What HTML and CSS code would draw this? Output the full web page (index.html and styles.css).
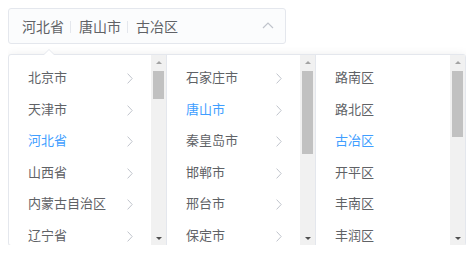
FILE: index.html
```html
<!DOCTYPE html>
<html lang="zh-CN">
<head>
  <meta charset="UTF-8"/>
  <title>级联选择器</title>
  <link rel="stylesheet" href="styles.css">
</head>
<body>
  <div class="cascader">
    <!-- 输入框 -->
    <div class="cascader-input">
      <span class="label">
        <span>河北省</span><i class="sep"></i><span>唐山市</span><i class="sep"></i><span>古冶区</span>
      </span>
      <svg class="caret" width="12" height="7" viewBox="0 0 12 7">
        <path d="M1 6 L6 1 L11 6" fill="none" stroke="#c0c4cc" stroke-width="1.2"/>
      </svg>
    </div>

    <!-- 下拉面板 -->
    <div class="cascader-panel">
      <div class="menu menu-1">
        <ul id="list-1" class="list"></ul>
        <div class="scrollbar"><b class="btn up"></b><div class="track"><i class="thumb" style="height: 28px"></i></div><b class="btn down"></b></div>
      </div>
      <div class="menu menu-2">
        <ul id="list-2" class="list"></ul>
        <div class="scrollbar"><b class="btn up"></b><div class="track"><i class="thumb" style="height: 83px"></i></div><b class="btn down"></b></div>
      </div>
      <div class="menu menu-3">
        <ul id="list-3" class="list"></ul>
        <div class="scrollbar"><b class="btn up"></b><div class="track"><i class="thumb" style="height: 66px"></i></div><b class="btn down"></b></div>
      </div>
    </div>
  </div>

  <div class="page-line"></div>

  <script>
    const provinces = ["北京市", "天津市", "河北省", "山西省", "内蒙古自治区", "辽宁省", "吉林省", "黑龙江省",
      "上海市", "江苏省", "浙江省", "安徽省", "福建省", "江西省", "山东省", "河南省", "湖北省", "湖南省",
      "广东省", "广西壮族自治区", "海南省", "重庆市", "四川省", "贵州省", "云南省", "西藏自治区", "陕西省",
      "甘肃省", "青海省", "宁夏回族自治区", "新疆维吾尔自治区", "台湾省", "香港特别行政区", "澳门特别行政区"];
    const cities = ["石家庄市", "唐山市", "秦皇岛市", "邯郸市", "邢台市", "保定市", "张家口市", "承德市",
      "沧州市", "廊坊市", "衡水市"];
    const districts = ["路南区", "路北区", "古冶区", "开平区", "丰南区", "丰润区", "曹妃甸区", "滦县",
      "滦南县", "乐亭县", "迁西县", "玉田县", "遵化市", "迁安市"];

    const arrow = '<svg class="arrow" width="6" height="11" viewBox="0 0 6 11">' +
      '<path d="M0.6 0.6 L5.2 5.5 L0.6 10.4" fill="none" stroke="#c0c4cc" stroke-width="1"/></svg>';

    function fill(id, items, active, hasChild) {
      document.getElementById(id).innerHTML = items.map(name =>
        '<li class="item' + (name === active ? ' active' : '') + '"><span class="name">' + name + '</span>' +
        (hasChild ? arrow : '') + '</li>'
      ).join("");
    }
    fill("list-1", provinces, "河北省", true);
    fill("list-2", cities, "唐山市", true);
    fill("list-3", districts, "古冶区", false);
  </script>
</body>
</html>
```

FILE: styles.css
```css
html {
  height: 100%;
}
body {
  margin: 8px;
  min-height: 237px;
  font-family: "Liberation Sans", "Noto Sans CJK SC", sans-serif;
  font-size: 13px;
  color: #606266;
  background: #fff;
}
.cascader {
  position: relative;
  width: 278px;
  z-index: 2;
}
/* INPUT */
.cascader-input {
  box-sizing: border-box;
  height: 36px;
  border: 1px solid #e4e7ed;
  border-radius: 3px;
  background: #fbfcfd;
  display: flex;
  align-items: center;
  justify-content: space-between;
  padding: 0 10px 0 13px;
}
.label {
  display: flex;
  align-items: center;
  font-size: 14px;
  line-height: 18px;
  padding-top: 1px;
}
.sep {
  display: inline-block;
  width: 1px;
  height: 12px;
  background: #e4e7ed;
  margin: 0 8px 0 6px;
}
.caret {
  margin-right: 1px;
  margin-top: -1px;
}
/* PANEL */
.cascader-panel {
  position: absolute;
  left: 0;
  top: 46px;
  display: flex;
  background: #fff;
  border: 1px solid #e4e7ed;
  border-radius: 3px;
  box-shadow: 0 2px 11px 0 rgba(0, 0, 0, 0.1);
}
.cascader-panel::before,
.cascader-panel::after {
  content: "";
  position: absolute;
  left: 34px;
  top: -6px;
  border: 6px solid transparent;
  border-top: 0;
  border-bottom-color: #e4e7ed;
}
.cascader-panel::after {
  top: -5px;
  border-bottom-color: #fff;
}
.menu {
  box-sizing: border-box;
  display: flex;
  height: 190px;
  border-right: 1px solid #e4e7ed;
}
.menu-1 { width: 158px; }
.menu-2 { width: 149px; }
.menu-3 { width: 149px; border-right: 0; }
.list {
  flex: 1;
  min-width: 0;
  list-style: none;
  margin: 0;
  padding: 7px 0 6px;
  overflow: hidden;
}

/* barre de défilement dessinée */
.scrollbar {
  width: 15px;
  display: flex;
  flex-direction: column;
  background: #f1f1f1;
}
.scrollbar .btn {
  height: 15px;
  display: flex;
  align-items: center;
  justify-content: center;
}
.scrollbar .btn::before {
  content: "";
  border: 3px solid transparent;
  border-left-width: 3.5px;
  border-right-width: 3.5px;
}
.scrollbar .up::before {
  border-top: 0;
  border-bottom-color: #a3a3a3;
  margin-top: -1px;
}
.scrollbar .down::before {
  border-bottom: 0;
  border-top-color: #505050;
  margin-top: 1px;
}
.track {
  flex: 1;
  padding: 1px 2px 0;
}
.thumb {
  display: block;
  background: #c1c1c1;
}

.item {
  position: relative;
  height: 31.6px;
  line-height: 31.6px;
  padding: 0 30px 0 19px;
  white-space: nowrap;
  overflow: hidden;
}
.item.active {
  color: #409eff;
}
.item .arrow {
  position: absolute;
  right: 18px;
  top: 11px;
}
/* ligne de la page sous le panneau */
.page-line {
  margin-top: 93px;
  height: 1px;
  margin-left: -8px;
  margin-right: -8px;
  background: #ebeef5;
}
```
